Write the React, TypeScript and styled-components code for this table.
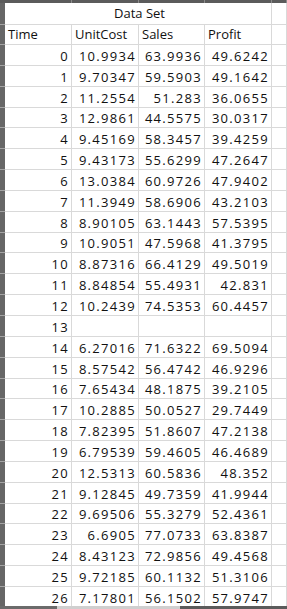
import React from "react";
import styled, { createGlobalStyle } from "styled-components";

const rows: (string | number)[][] = [
  [0, "10.9934", "63.9936", "49.6242"],
  [1, "9.70347", "59.5903", "49.1642"],
  [2, "11.2554", "51.283", "36.0655"],
  [3, "12.9861", "44.5575", "30.0317"],
  [4, "9.45169", "58.3457", "39.4259"],
  [5, "9.43173", "55.6299", "47.2647"],
  [6, "13.0384", "60.9726", "47.9402"],
  [7, "11.3949", "58.6906", "43.2103"],
  [8, "8.90105", "63.1443", "57.5395"],
  [9, "10.9051", "47.5968", "41.3795"],
  [10, "8.87316", "66.4129", "49.5019"],
  [11, "8.84854", "55.4931", "42.831"],
  [12, "10.2439", "74.5353", "60.4457"],
  [13, "", "", ""],
  [14, "6.27016", "71.6322", "69.5094"],
  [15, "8.57542", "56.4742", "46.9296"],
  [16, "7.65434", "48.1875", "39.2105"],
  [17, "10.2885", "50.0527", "29.7449"],
  [18, "7.82395", "51.8607", "47.2138"],
  [19, "6.79539", "59.4605", "46.4689"],
  [20, "12.5313", "60.5836", "48.352"],
  [21, "9.12845", "49.7359", "41.9944"],
  [22, "9.69506", "55.3279", "52.4361"],
  [23, "6.6905", "77.0733", "63.8387"],
  [24, "8.43123", "72.9856", "49.4568"],
  [25, "9.72185", "60.1132", "51.3106"],
  [26, "7.17801", "56.1502", "57.9747"],
];

const headers = ["Time", "UnitCost", "Sales", "Profit"];

const GlobalStyle = createGlobalStyle`
  html, body {
    margin: 0;
    padding: 0;
    background: #fff;
  }
  body {
    width: 287px;
    height: 609px;
    overflow: hidden;
    font-family: "Open Sans", "Liberation Sans", sans-serif;
    color: #111;
  }
`;

const Page = styled.div`
  display: flex;
  flex-direction: column;
  width: 287px;
  height: 609px;
`;

const Sheet = styled.div`
  flex: 1;
  overflow: hidden;
  display: grid;
  grid-template-columns: 5px 67px 67px 66px 67px 1fr;
  grid-template-rows: 3px 22px 20px repeat(27, 20.85px) 1fr;
`;

const Corner = styled.div`
  background: #5b5b5b;
`;

const ColHead = styled.div`
  background: #5b5b5b;
  border-right: 1px solid #8a8a8a;
`;

const RowHead = styled.div`
  background: #666;
  border-bottom: 1px solid #a3a3a3;
`;

const Cell = styled.div<{ $num?: boolean; $span?: number; $pb?: number }>`
  grid-column: span ${(p) => p.$span ?? 1};
  display: flex;
  align-items: flex-end;
  justify-content: ${(p) => (p.$span && p.$span > 1 ? "center" : p.$num ? "flex-end" : "flex-start")};
  padding: 0 ${(p) => (p.$num ? 2 : 0)}px ${(p) => p.$pb ?? 1}px ${(p) => (p.$num ? 0 : 3)}px;
  border-right: 1px solid #d9d9d9;
  border-bottom: 1px solid #d9d9d9;
  font-size: 13px;
  line-height: 16px;
  letter-spacing: ${(p) => (p.$num ? 1.3 : 0)}px;
  white-space: nowrap;
  overflow: hidden;
`;

const ScrollBar = styled.div`
  display: flex;
  height: 3px;
`;

const ScrollPart = styled.div<{ $w: string; $c: string }>`
  flex: ${(p) => p.$w};
  background: ${(p) => p.$c};
`;

const App: React.FC = () => {
  return (
    <Page>
      <GlobalStyle />
      <Sheet>
        <Corner />
        <ColHead />
        <ColHead />
        <ColHead />
        <ColHead />
        <ColHead />

        <RowHead />
        <Cell $span={4} $pb={3}>Data Set</Cell>
        <Cell />

        <RowHead />
        {headers.map((h) => (
          <Cell key={h} $pb={2}>{h}</Cell>
        ))}
        <Cell />

        {rows.map((r) => (
          <React.Fragment key={r[0]}>
            <RowHead />
            {r.map((v, i) => (
              <Cell key={i} $num>{v}</Cell>
            ))}
            <Cell />
          </React.Fragment>
        ))}
      </Sheet>
      <ScrollBar>
        <ScrollPart $w="0 0 57px" $c="#6b6b6b" />
        <ScrollPart $w="0 0 123px" $c="#cfcfcf" />
        <ScrollPart $w="1" $c="#5b5b5b" />
      </ScrollBar>
    </Page>
  );
};

export default App;
